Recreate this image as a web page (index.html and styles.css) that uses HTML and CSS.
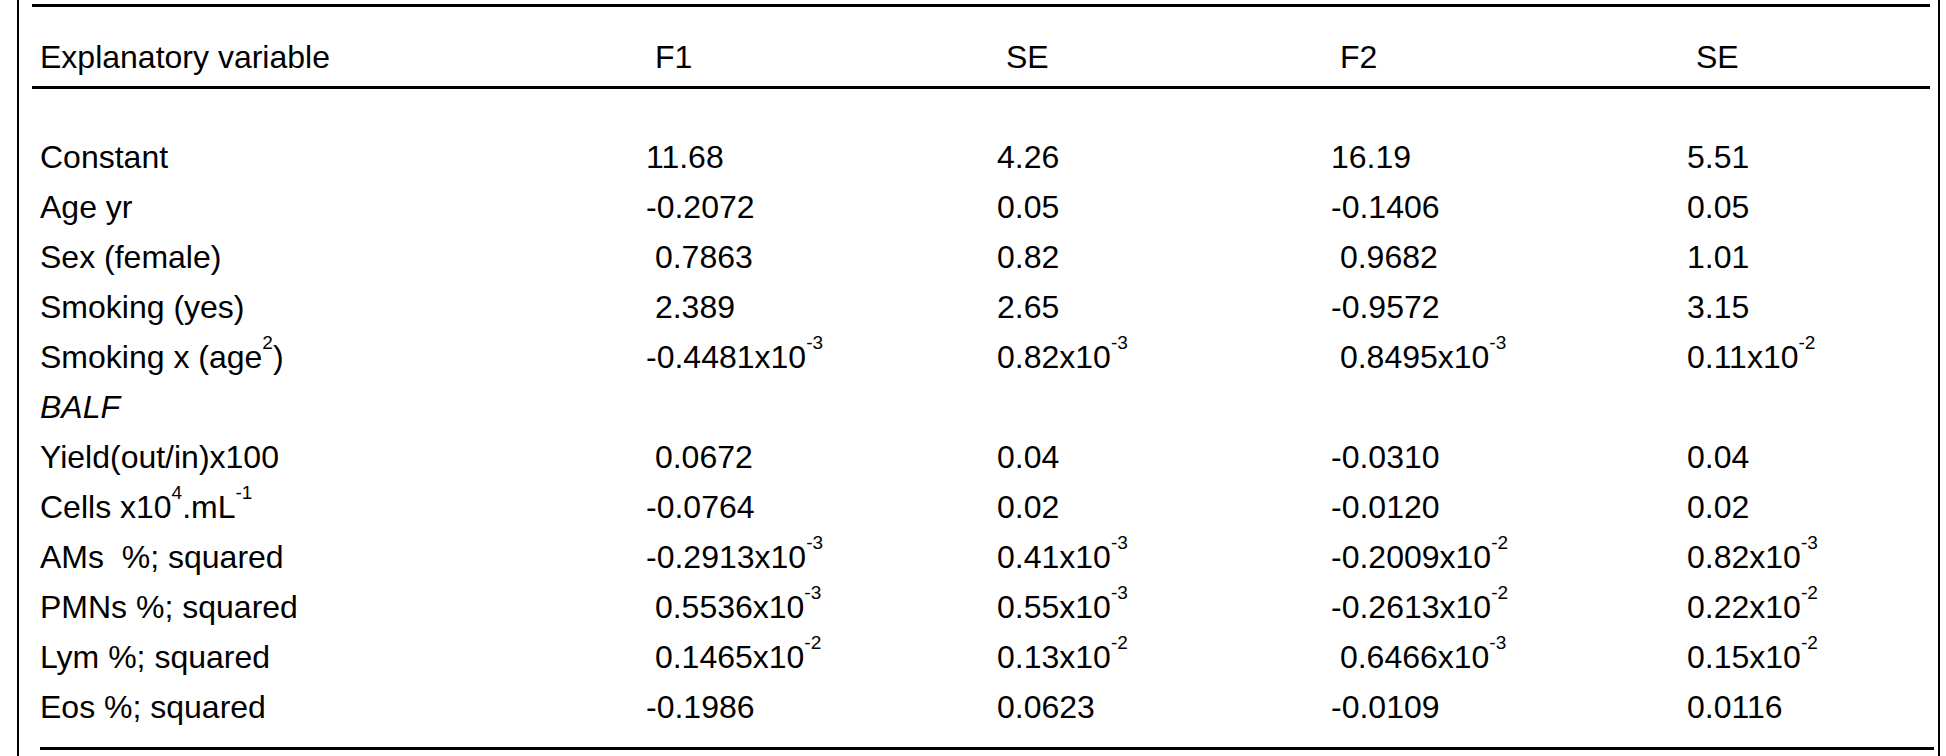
FILE: index.html
```html
<!DOCTYPE html>
<html lang="en">
<head>
<meta charset="utf-8">
<title>Regression table</title>
<link rel="stylesheet" href="styles.css">
</head>
<body>
<div class="frame">
  <div class="thead">
    <div class="c">Explanatory variable</div>
    <div class="c">F1</div>
    <div class="c">SE</div>
    <div class="c">F2</div>
    <div class="c">SE</div>
  </div>
  <div class="tbody">
    <div class="row"><div>Constant</div><div>11.68</div><div>4.26</div><div>16.19</div><div>5.51</div></div>
    <div class="row"><div>Age yr</div><div>-0.2072</div><div>0.05</div><div>-0.1406</div><div>0.05</div></div>
    <div class="row"><div>Sex (female)</div><div class="sp">0.7863</div><div>0.82</div><div class="sp">0.9682</div><div>1.01</div></div>
    <div class="row"><div>Smoking (yes)</div><div class="sp">2.389</div><div>2.65</div><div>-0.9572</div><div>3.15</div></div>
    <div class="row"><div>Smoking x (age<sup>2</sup>)</div><div>-0.4481x10<sup>-3</sup></div><div>0.82x10<sup>-3</sup></div><div class="sp">0.8495x10<sup>-3</sup></div><div>0.11x10<sup>-2</sup></div></div>
    <div class="row"><div class="it">BALF</div><div></div><div></div><div></div><div></div></div>
    <div class="row"><div>Yield(out/in)x100</div><div class="sp">0.0672</div><div>0.04</div><div>-0.0310</div><div>0.04</div></div>
    <div class="row"><div>Cells x10<sup>4</sup>.mL<sup>-1</sup></div><div>-0.0764</div><div>0.02</div><div>-0.0120</div><div>0.02</div></div>
    <div class="row"><div>AMs&nbsp; %; squared</div><div>-0.2913x10<sup>-3</sup></div><div>0.41x10<sup>-3</sup></div><div>-0.2009x10<sup>-2</sup></div><div>0.82x10<sup>-3</sup></div></div>
    <div class="row"><div>PMNs %; squared</div><div class="sp">0.5536x10<sup>-3</sup></div><div>0.55x10<sup>-3</sup></div><div>-0.2613x10<sup>-2</sup></div><div>0.22x10<sup>-2</sup></div></div>
    <div class="row"><div>Lym %; squared</div><div class="sp">0.1465x10<sup>-2</sup></div><div>0.13x10<sup>-2</sup></div><div class="sp">0.6466x10<sup>-3</sup></div><div>0.15x10<sup>-2</sup></div></div>
    <div class="row"><div>Eos %; squared</div><div>-0.1986</div><div>0.0623</div><div>-0.0109</div><div>0.0116</div></div>
  </div>
</div>
</body>
</html>
```

FILE: styles.css
```css
body {
  margin: 0;
  background: #fff;
}

.frame {
  margin-left: 17px;
  width: 1923px;
  height: 756px;
  box-sizing: border-box;
  border-left: 2px solid #000;
  border-right: 2px solid #000;
  padding-top: 4px;
  font-family: "Liberation Sans", Arial, sans-serif;
  font-size: 32px;
  color: #000;
}

.thead {
  margin: 0 8px 0 13px;
  border-top: 3px solid #000;
  border-bottom: 3px solid #000;
  padding: 25px 0 4px;
  display: grid;
  grid-template-columns: 615px 351px 334px 356px 1fr;
  line-height: 50px;
}

.thead .c {
  padding-left: 8px;
  white-space: nowrap;
}

.tbody {
  margin: 0 4px 0 21px;
  border-bottom: 3px solid #000;
  padding: 43px 0 15px;
}

.row {
  display: grid;
  grid-template-columns: 606px 351px 334px 356px 1fr;
  height: 50px;
  line-height: 50px;
  white-space: nowrap;
}

.sp {
  padding-left: 0.278em;
}

.it {
  font-style: italic;
}

sup {
  font-size: 19px;
  line-height: 0;
  vertical-align: 19px;
}
```
